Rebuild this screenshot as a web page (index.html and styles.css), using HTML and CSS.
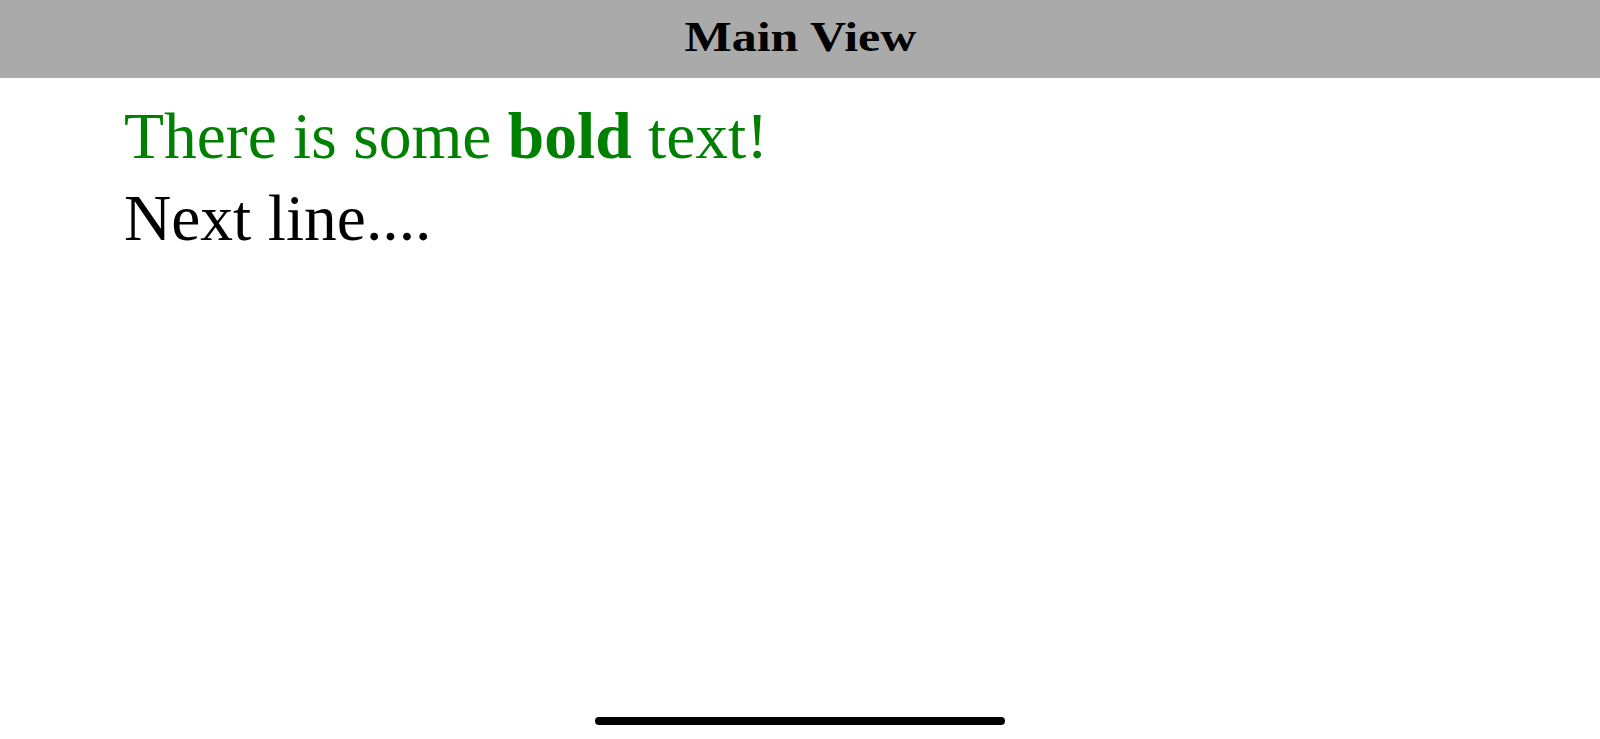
FILE: index.html
```html
<!DOCTYPE html>
<html>
<head>
<meta charset="utf-8">
<link rel="stylesheet" href="styles.css">
</head>
<body>
<div class="app">
  <header class="nav">
    <h1 class="nav-title">Main View</h1>
  </header>
  <main class="content">
    <div class="line green">There is some <b>bold</b> text!</div>
    <div class="line">Next line....</div>
  </main>
  <div class="home-indicator"></div>
</div>
</body>
</html>
```

FILE: styles.css
```css
html, body {
  margin: 0;
  padding: 0;
  background: #ffffff;
}
.app {
  display: flex;
  flex-direction: column;
  height: 739px;
  font-family: "Liberation Serif", "Times New Roman", serif;
}
.nav {
  height: 78px;
  background: #aaaaaa;
  display: flex;
  align-items: center;
  justify-content: center;
  flex-shrink: 0;
}
.nav-title {
  margin: 0;
  font-size: 42px;
  font-weight: bold;
  line-height: 42px;
  color: #000;
  transform: scaleX(1.19);
  padding-bottom: 5px;
}
.content {
  flex: 1;
  padding: 17px 0 0 124px;
}
.line {
  font-size: 65.5px;
  line-height: 82px;
  color: #000;
  white-space: nowrap;
}
.green {
  color: #008000;
}
.home-indicator {
  width: 410px;
  height: 8px;
  border-radius: 4px;
  background: #000;
  margin: 0 auto 14px;
  flex-shrink: 0;
}
```
